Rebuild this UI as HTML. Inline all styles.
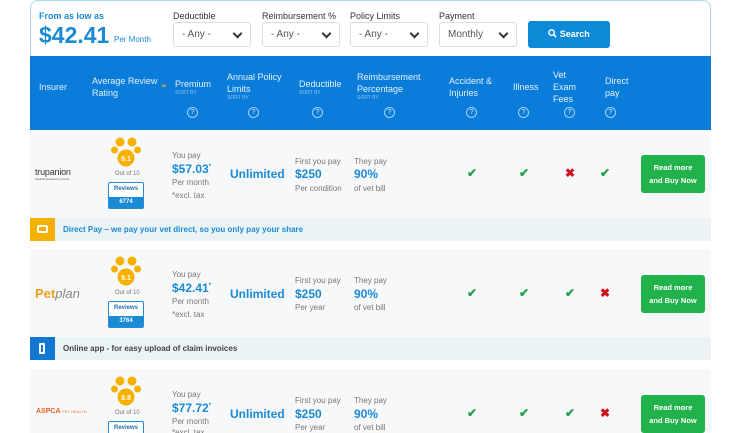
<!DOCTYPE html>
<html><head><style>
*{margin:0;padding:0;box-sizing:border-box}
html,body{width:750px;height:433px;overflow:hidden}
body{background:#fff;font-family:"Liberation Sans",sans-serif;position:relative}
.a{position:absolute}
.top{left:30px;top:0;width:681px;height:57px;border:1px solid #a9d8ef;border-bottom:none;border-radius:8px 8px 0 0;background:#fff}
.lbl{font-size:9px;color:#333}
.sel{height:25px;border:1px solid #ddd;border-radius:3px;font-size:10px;color:#555;padding:6px 0 0 8px;background:#fff}
.sel:after{content:"";position:absolute;right:9px;top:7px;width:5px;height:5px;border-right:2px solid #333;border-bottom:2px solid #333;transform:rotate(45deg)}
.hdr{left:30px;top:56px;width:681px;height:74px;background:#0a7ddb;color:#e6f1fb;font-size:9px;line-height:12px}
.hdr .a small{display:block;font-size:5px;color:#8cc0ec;line-height:6px}
.q{width:11px;height:11px;border:1px solid #a8d0f2;border-radius:50%;font-size:7px;line-height:9px;text-align:center;color:#cfe5f8;top:51px}
.row{left:30px;width:681px;height:88px;background:#f7f8fa}
.ban{left:30px;width:681px;height:23px;background:#ecf3f7;font-size:8px;font-weight:bold;color:#1a8ad4;padding:7px 0 0 33px}
.ban i{position:absolute;left:0;top:0;width:25px;height:23px}
.paw{width:30px;height:32px}
.small{font-size:8px;color:#777}
.price{font-size:12px;font-weight:bold;color:#1a8ad4}
.unl{font-size:12px;font-weight:bold;color:#1a8ad4}
.rev{width:36px;height:27px;border:1px solid #2a8ad6;border-radius:2px;background:#fff;font-size:6px;font-weight:bold;color:#1f6fb0;text-align:center}
.rev b{display:block;position:absolute;left:0;right:0;bottom:0;height:11px;background:#1a8ad4;color:#fff;line-height:11px}
.btn{width:64px;height:38px;background:#22b24c;border-radius:3px;color:#fff;font-size:7.5px;font-weight:bold;text-align:center;line-height:13px;padding-top:6px}
.ck{color:#22a04a;font-size:12px;font-weight:bold}
.x{color:#d0101c;font-size:12px;font-weight:bold}
</style></head><body>
<div class="a top"></div>
<div class="a" style="left:39px;top:11px;font-size:9px;font-weight:bold;color:#1a8ad4">From as low as</div>
<div class="a" style="left:39px;top:22px;font-size:23px;font-weight:bold;color:#1a8ad4">$42.41</div>
<div class="a" style="left:114px;top:35px;font-size:8px;color:#1a8ad4">Per Month</div>
<div class="a lbl" style="left:173px;top:11px">Deductible</div>
<div class="a sel" style="left:173px;top:22px;width:78px">- Any -</div>
<div class="a lbl" style="left:262px;top:11px">Reimbursement %</div>
<div class="a sel" style="left:262px;top:22px;width:78px">- Any -</div>
<div class="a lbl" style="left:350px;top:11px">Policy Limits</div>
<div class="a sel" style="left:350px;top:22px;width:78px">- Any -</div>
<div class="a lbl" style="left:439px;top:11px">Payment</div>
<div class="a sel" style="left:439px;top:22px;width:78px">Monthly</div>
<div class="a" style="left:528px;top:21px;width:82px;height:27px;background:#0c8ad8;border-radius:3px;color:#fff;font-size:9px;font-weight:bold;text-align:center;line-height:27px"><svg width="9" height="9" viewBox="0 0 10 10" style="vertical-align:-1px"><circle cx="4" cy="4" r="3" fill="none" stroke="#fff" stroke-width="1.6"/><path d="M6.3 6.3L9 9" stroke="#fff" stroke-width="1.8"/></svg> Search</div>

<div class="a hdr">
<div class="a" style="left:9px;top:25px">Insurer</div>
<div class="a" style="left:62px;top:19px;width:80px">Average Review Rating</div>
<div class="a" style="left:130px;top:22px;color:#f0b020;font-size:9px;font-weight:bold">&#8964;</div>
<div class="a" style="left:145px;top:22px">Premium<small>SORT BY</small></div>
<div class="a" style="left:197px;top:15px;width:60px">Annual Policy Limits<small>SORT BY</small></div>
<div class="a" style="left:269px;top:22px">Deductible<small>SORT BY</small></div>
<div class="a" style="left:327px;top:15px;width:80px">Reimbursement Percentage<small>SORT BY</small></div>
<div class="a" style="left:419px;top:19px;width:50px">Accident &amp; Injuries</div>
<div class="a" style="left:483px;top:25px">Illness</div>
<div class="a" style="left:523px;top:13px;width:30px">Vet Exam Fees</div>
<div class="a" style="left:575px;top:19px;width:30px">Direct pay</div>
<div class="a q" style="left:157px">?</div><div class="a q" style="left:218px">?</div><div class="a q" style="left:282px">?</div>
<div class="a q" style="left:354px">?</div><div class="a q" style="left:436px">?</div><div class="a q" style="left:488px">?</div>
<div class="a q" style="left:534px">?</div><div class="a q" style="left:575px">?</div>
</div>

<div class="a row" style="top:130px"></div>
<div class="a ban" style="top:218px"><i style="background:#f5b000"></i><span class="a" style="left:7px;top:7px;width:11px;height:8px;border:2px solid #fff;border-radius:2px"></span>Direct Pay – we pay your vet direct, so you only pay your share</div>
<div class="a row" style="top:249px"></div>
<div class="a ban" style="top:337px;color:#444"><i style="background:#1177d0"></i><span class="a" style="left:9px;top:6px;width:6px;height:11px;border:2px solid #fff;border-radius:1px"></span>Online app - for easy upload of claim invoices</div>
<div class="a row" style="top:369px;height:64px"></div>

<div class="a" style="left:35px;top:167px;font-size:9px;color:#333;letter-spacing:-.2px">trupanion<div style="font-size:3px;color:#666">Medical insurance for your pet</div></div>
<div class="a" style="left:35px;top:286px;font-size:13px;font-weight:bold;color:#f0a020">Pet<span style="color:#888;font-weight:normal;font-style:italic">plan</span></div>
<div class="a" style="left:36px;top:408px;font-size:7px;font-weight:bold;color:#f06020">ASPCA <span style="font-size:4px;color:#f7a070">PET HEALTH</span></div>

<svg width="0" height="0" style="position:absolute"><defs><g id="p"><circle cx="9" cy="5" r="4.5" fill="#f5b000"/><circle cx="21" cy="5" r="4.5" fill="#f5b000"/><circle cx="3.5" cy="13" r="3.5" fill="#f5b000"/><circle cx="26.5" cy="13" r="3.5" fill="#f5b000"/><circle cx="15" cy="21" r="8.5" fill="#f5b000"/></g></defs></svg>

<svg class="a paw" style="left:111px;top:137px" viewBox="0 0 30 32"><use href="#p"/><text x="15" y="24" font-size="7" fill="#fff" text-anchor="middle" font-family="Liberation Sans" font-weight="bold">9.1</text></svg>
<div class="a small" style="left:115px;top:171px;font-size:6px">Out of 10</div>
<div class="a rev" style="left:108px;top:182px;padding-top:3px">Reviews<b>6774</b></div>
<div class="a small" style="left:172px;top:151px">You pay</div><div class="a price" style="left:172px;top:162px">$57.03<sup style="font-size:6px">*</sup></div><div class="a small" style="left:172px;top:178px">Per month</div><div class="a small" style="left:172px;top:191px">*excl. tax</div>
<div class="a unl" style="left:230px;top:167px">Unlimited</div>
<div class="a small" style="left:295px;top:157px">First you pay</div><div class="a price" style="left:295px;top:167px">$250</div><div class="a small" style="left:295px;top:184px">Per condition</div>
<div class="a small" style="left:354px;top:157px">They pay</div><div class="a price" style="left:354px;top:167px">90%</div><div class="a small" style="left:354px;top:184px">of vet bill</div>
<div class="a ck" style="left:467px;top:166px">&#10004;</div><div class="a ck" style="left:519px;top:166px">&#10004;</div><div class="a x" style="left:565px;top:166px">&#10006;</div><div class="a ck" style="left:600px;top:166px">&#10004;</div>
<div class="a btn" style="left:641px;top:155px">Read more<br>and Buy Now</div>

<svg class="a paw" style="left:111px;top:256px" viewBox="0 0 30 32"><use href="#p"/><text x="15" y="24" font-size="7" fill="#fff" text-anchor="middle" font-family="Liberation Sans" font-weight="bold">9.1</text></svg>
<div class="a small" style="left:115px;top:290px;font-size:6px">Out of 10</div>
<div class="a rev" style="left:108px;top:301px;padding-top:3px">Reviews<b>3764</b></div>
<div class="a small" style="left:172px;top:270px">You pay</div><div class="a price" style="left:172px;top:281px">$42.41<sup style="font-size:6px">*</sup></div><div class="a small" style="left:172px;top:297px">Per month</div><div class="a small" style="left:172px;top:310px">*excl. tax</div>
<div class="a unl" style="left:230px;top:287px">Unlimited</div>
<div class="a small" style="left:295px;top:276px">First you pay</div><div class="a price" style="left:295px;top:287px">$250</div><div class="a small" style="left:295px;top:303px">Per year</div>
<div class="a small" style="left:354px;top:276px">They pay</div><div class="a price" style="left:354px;top:287px">90%</div><div class="a small" style="left:354px;top:303px">of vet bill</div>
<div class="a ck" style="left:467px;top:286px">&#10004;</div><div class="a ck" style="left:519px;top:286px">&#10004;</div><div class="a ck" style="left:565px;top:286px">&#10004;</div><div class="a x" style="left:600px;top:286px">&#10006;</div>
<div class="a btn" style="left:641px;top:275px">Read more<br>and Buy Now</div>

<svg class="a paw" style="left:111px;top:376px" viewBox="0 0 30 32"><use href="#p"/><text x="15" y="24" font-size="7" fill="#fff" text-anchor="middle" font-family="Liberation Sans" font-weight="bold">8.8</text></svg>
<div class="a small" style="left:115px;top:410px;font-size:6px">Out of 10</div>
<div class="a" style="left:108px;top:421px;width:36px;height:12px;overflow:hidden"><div class="a rev" style="left:0;top:0;padding-top:3px">Reviews</div></div>
<div class="a small" style="left:172px;top:390px">You pay</div><div class="a price" style="left:172px;top:401px">$77.72<sup style="font-size:6px">*</sup></div><div class="a small" style="left:172px;top:417px">Per month</div>
<div class="a" style="left:172px;top:428px;width:60px;height:5px;overflow:hidden"><div class="small">*excl. tax</div></div>
<div class="a unl" style="left:230px;top:407px">Unlimited</div>
<div class="a small" style="left:295px;top:396px">First you pay</div><div class="a price" style="left:295px;top:407px">$250</div><div class="a small" style="left:295px;top:423px">Per year</div>
<div class="a small" style="left:354px;top:396px">They pay</div><div class="a price" style="left:354px;top:407px">90%</div><div class="a small" style="left:354px;top:423px">of vet bill</div>
<div class="a ck" style="left:467px;top:406px">&#10004;</div><div class="a ck" style="left:519px;top:406px">&#10004;</div><div class="a ck" style="left:565px;top:406px">&#10004;</div><div class="a x" style="left:600px;top:406px">&#10006;</div>
<div class="a btn" style="left:641px;top:395px">Read more<br>and Buy Now</div>
</body></html>
